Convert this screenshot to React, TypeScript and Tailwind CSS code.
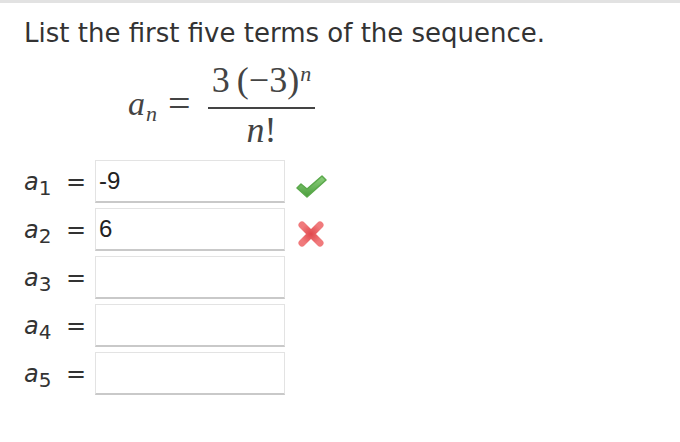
import React from 'react';

const CheckMark = () => (
  <svg width="32" height="25" viewBox="0 0 32 25">
    <defs>
      <linearGradient id="g" x1="0" y1="0" x2="0" y2="1">
        <stop offset="0" stopColor="#8fd07f" />
        <stop offset="1" stopColor="#4a9e3c" />
      </linearGradient>
    </defs>
    <path d="M2 14 L6 10 L12 15 L27 2 L31 6 L12 23 Z" fill="url(#g)" stroke="#5aa84b" strokeWidth="1.5" strokeLinejoin="round" />
  </svg>
);

const CrossMark = () => (
  <svg width="28" height="28" viewBox="0 0 28 28">
    <defs>
      <radialGradient id="r" cx="0.5" cy="0.5" r="0.6">
        <stop offset="0" stopColor="#e0474c" />
        <stop offset="1" stopColor="#f07a7c" />
      </radialGradient>
    </defs>
    <path d="M5 5 L23 23 M23 5 L5 23" stroke="url(#r)" strokeWidth="7" strokeLinecap="round" />
  </svg>
);

const rows: { n: number; value: string; status?: 'ok' | 'bad' }[] = [
  { n: 1, value: '-9', status: 'ok' },
  { n: 2, value: '6', status: 'bad' },
  { n: 3, value: '' },
  { n: 4, value: '' },
  { n: 5, value: '' },
];

export default function App() {
  return (
    <div className="w-[680px] h-[442px] bg-white border-t-[3px] border-[#e2e2e2] overflow-hidden">
      <div className="pl-6 pt-[11px] text-[#333] text-[26px] leading-[39px] font-['DejaVu_Sans',sans-serif]">
        List the first five terms of the sequence.
      </div>

      {/* formula */}
      <div className="flex items-start pl-[128px] mt-[9px] text-[#444] font-['Liberation_Serif',serif]">
        <div className="w-[40px] mt-[25px] italic text-[34px] leading-none">
          a<sub className="text-[22px] ml-[1px]">n</sub>
        </div>
        <div className="w-[40px] mt-[22px] text-[40px] leading-none">=</div>
        <div className="flex flex-col items-center w-[107px]">
          <div className="text-[36px] leading-none pb-[9px] whitespace-nowrap">
            3<span className="ml-[7px]">(−3)</span><sup className="italic text-[22px] ml-[1px]">n</sup>
          </div>
          <div className="h-[2px] w-[107px] bg-[#444]" />
          <div className="text-[36px] leading-none pt-[3px]"><span className="italic">n</span>!</div>
        </div>
      </div>

      {/* answer rows */}
      <div className="flex flex-col gap-[5px] mt-[12px] pl-6">
        {rows.map(r => (
          <div key={r.n} className="flex items-center h-[43px]">
            <div className="w-[42px] text-[#333] font-['DejaVu_Sans',sans-serif] text-[24px]">
              <span className="italic">a</span><sub className="text-[20px]">{r.n}</sub>
            </div>
            <div className="w-[29px] text-[#333] text-[24px] font-['DejaVu_Sans',sans-serif]">=</div>
            <div className="w-[190px] h-[43px] border border-[#e3e3e3] border-b-2 border-b-[#c9c9c9] flex items-center px-[3px] text-[24px] text-[#222] font-['Liberation_Sans',sans-serif]">
              {r.value}
            </div>
            <div className="ml-[10px] mt-[9px] w-[32px] flex items-center justify-center">
              {r.status === 'ok' && <CheckMark />}
              {r.status === 'bad' && <CrossMark />}
            </div>
          </div>
        ))}
      </div>
    </div>
  );
}
